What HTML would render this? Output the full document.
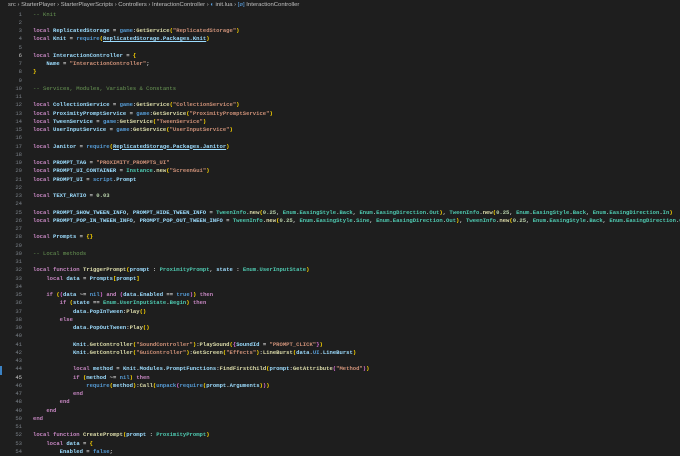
<!DOCTYPE html>
<html><head><meta charset="utf-8"><style>
body{margin:0;background:#1e1e1e;width:680px;height:454px;overflow:hidden;font-family:"Liberation Mono",monospace;}
.bc{position:absolute;top:0;left:0;height:10px;font:5.9px/10px "Liberation Sans",sans-serif;color:#c0c0c0;padding-left:8px;white-space:nowrap}
.code{position:absolute;top:10.5px;left:0;width:680px}
.l{height:8.25px;line-height:8.25px;font-size:5.55px;font-weight:bold;white-space:pre;position:relative}
.n{position:absolute;left:0;width:22px;text-align:right;color:#7a8088;font-weight:normal}
.t{position:absolute;left:33px;color:#d4d4d4}
.k{color:#c586c0}.v{color:#9cdcfe}.s{color:#ce9178}.f{color:#dcdcaa}.c{color:#6a9955;font-weight:normal}.e{color:#4ec9b0}.b{color:#569cd6}.m{color:#b5cea8}.y{color:#ffd700}.p{color:#da70d6}.u{text-decoration:underline}
</style></head><body>
<div class="bc">src › StarterPlayer › StarterPlayerScripts › Controllers › InteractionController › <span style="color:#5aa0e0">◐</span> init.lua › <span style="color:#5aa0e0">[ø]</span> InteractionController</div>
<div style="position:absolute;left:0;top:366px;width:2px;height:9px;background:#3b82c4"></div>
<div class="code">
<div class="l"><span class="n">1</span><span class="t"><span class="c">-- Knit</span></span></div>
<div class="l"><span class="n">2</span></div>
<div class="l"><span class="n">3</span><span class="t"><span class="k">local</span> <span class="v">ReplicatedStorage</span> = <span class="b">game</span>:<span class="f">GetService</span><span class="y">(</span><span class="s">"ReplicatedStorage"</span><span class="y">)</span></span></div>
<div class="l"><span class="n">4</span><span class="t"><span class="k">local</span> <span class="v">Knit</span> = <span class="b">require</span><span class="y">(</span><span class="v u">ReplicatedStorage.Packages.Knit</span><span class="y">)</span></span></div>
<div class="l"><span class="n">5</span></div>
<div class="l"><span class="n" style="color:#ccc">6</span><span class="t"><span class="k">local</span> <span class="v">InteractionController</span> = <span class="y">{</span></span></div>
<div class="l"><span class="n">7</span><span class="t">    <span class="v">Name</span> = <span class="s">"InteractionController"</span>;</span></div>
<div class="l"><span class="n">8</span><span class="t"><span class="y">}</span></span></div>
<div class="l"><span class="n">9</span></div>
<div class="l"><span class="n">10</span><span class="t"><span class="c">-- Services, Modules, Variables &amp; Constants</span></span></div>
<div class="l"><span class="n">11</span></div>
<div class="l"><span class="n">12</span><span class="t"><span class="k">local</span> <span class="v">CollectionService</span> = <span class="b">game</span>:<span class="f">GetService</span><span class="y">(</span><span class="s">"CollectionService"</span><span class="y">)</span></span></div>
<div class="l"><span class="n">13</span><span class="t"><span class="k">local</span> <span class="v">ProximityPromptService</span> = <span class="b">game</span>:<span class="f">GetService</span><span class="y">(</span><span class="s">"ProximityPromptService"</span><span class="y">)</span></span></div>
<div class="l"><span class="n">14</span><span class="t"><span class="k">local</span> <span class="v">TweenService</span> = <span class="b">game</span>:<span class="f">GetService</span><span class="y">(</span><span class="s">"TweenService"</span><span class="y">)</span></span></div>
<div class="l"><span class="n">15</span><span class="t"><span class="k">local</span> <span class="v">UserInputService</span> = <span class="b">game</span>:<span class="f">GetService</span><span class="y">(</span><span class="s">"UserInputService"</span><span class="y">)</span></span></div>
<div class="l"><span class="n">16</span></div>
<div class="l"><span class="n">17</span><span class="t"><span class="k">local</span> <span class="v">Janitor</span> = <span class="b">require</span><span class="y">(</span><span class="v u">ReplicatedStorage.Packages.Janitor</span><span class="y">)</span></span></div>
<div class="l"><span class="n">18</span></div>
<div class="l"><span class="n">19</span><span class="t"><span class="k">local</span> <span class="v">PROMPT_TAG</span> = <span class="s">"PROXIMITY_PROMPTS_UI"</span></span></div>
<div class="l"><span class="n">20</span><span class="t"><span class="k">local</span> <span class="v">PROMPT_UI_CONTAINER</span> = <span class="e">Instance</span>.<span class="f">new</span><span class="y">(</span><span class="s">"ScreenGui"</span><span class="y">)</span></span></div>
<div class="l"><span class="n">21</span><span class="t"><span class="k">local</span> <span class="v">PROMPT_UI</span> = <span class="b">script</span>.<span class="v">Prompt</span></span></div>
<div class="l"><span class="n">22</span></div>
<div class="l"><span class="n">23</span><span class="t"><span class="k">local</span> <span class="v">TEXT_RATIO</span> = <span class="m">0.03</span></span></div>
<div class="l"><span class="n">24</span></div>
<div class="l"><span class="n">25</span><span class="t"><span class="k">local</span> <span class="v">PROMPT_SHOW_TWEEN_INFO</span>, <span class="v">PROMPT_HIDE_TWEEN_INFO</span> = <span class="e">TweenInfo</span>.<span class="f">new</span><span class="y">(</span><span class="m">0.25</span>, <span class="e">Enum</span>.<span class="e">EasingStyle</span>.<span class="e">Back</span>, <span class="e">Enum</span>.<span class="e">EasingDirection</span>.<span class="e">Out</span><span class="y">)</span>, <span class="e">TweenInfo</span>.<span class="f">new</span><span class="y">(</span><span class="m">0.25</span>, <span class="e">Enum</span>.<span class="e">EasingStyle</span>.<span class="e">Back</span>, <span class="e">Enum</span>.<span class="e">EasingDirection</span>.<span class="e">In</span><span class="y">)</span></span></div>
<div class="l"><span class="n">26</span><span class="t"><span class="k">local</span> <span class="v">PROMPT_POP_IN_TWEEN_INFO</span>, <span class="v">PROMPT_POP_OUT_TWEEN_INFO</span> = <span class="e">TweenInfo</span>.<span class="f">new</span><span class="y">(</span><span class="m">0.25</span>, <span class="e">Enum</span>.<span class="e">EasingStyle</span>.<span class="e">Sine</span>, <span class="e">Enum</span>.<span class="e">EasingDirection</span>.<span class="e">Out</span><span class="y">)</span>, <span class="e">TweenInfo</span>.<span class="f">new</span><span class="y">(</span><span class="m">0.25</span>, <span class="e">Enum</span>.<span class="e">EasingStyle</span>.<span class="e">Back</span>, <span class="e">Enum</span>.<span class="e">EasingDirection</span>.<span class="e">Out</span><span class="y">)</span></span></div>
<div class="l"><span class="n">27</span></div>
<div class="l"><span class="n">28</span><span class="t"><span class="k">local</span> <span class="v">Prompts</span> = <span class="y">{}</span></span></div>
<div class="l"><span class="n">29</span></div>
<div class="l"><span class="n">30</span><span class="t"><span class="c">-- Local methods</span></span></div>
<div class="l"><span class="n">31</span></div>
<div class="l"><span class="n">32</span><span class="t"><span class="k">local</span> <span class="k">function</span> <span class="f">TriggerPrompt</span><span class="y">(</span><span class="v">prompt</span> : <span class="e">ProximityPrompt</span>, <span class="v">state</span> : <span class="e">Enum.UserInputState</span><span class="y">)</span></span></div>
<div class="l"><span class="n">33</span><span class="t">    <span class="k">local</span> <span class="v">data</span> = <span class="v">Prompts</span><span class="y">[</span><span class="v">prompt</span><span class="y">]</span></span></div>
<div class="l"><span class="n">34</span></div>
<div class="l"><span class="n">35</span><span class="t">    <span class="k">if</span> <span class="y">(</span><span class="p">(</span><span class="v">data</span> ~= <span class="b">nil</span><span class="p">)</span> <span class="k">and</span> <span class="p">(</span><span class="v">data</span>.<span class="v">Enabled</span> == <span class="b">true</span><span class="p">)</span><span class="y">)</span> <span class="k">then</span></span></div>
<div class="l"><span class="n">36</span><span class="t">        <span class="k">if</span> <span class="y">(</span><span class="v">state</span> == <span class="e">Enum</span>.<span class="e">UserInputState</span>.<span class="e">Begin</span><span class="y">)</span> <span class="k">then</span></span></div>
<div class="l"><span class="n">37</span><span class="t">            <span class="v">data</span>.<span class="v">PopInTween</span>:<span class="f">Play</span><span class="y">()</span></span></div>
<div class="l"><span class="n">38</span><span class="t">        <span class="k">else</span></span></div>
<div class="l"><span class="n">39</span><span class="t">            <span class="v">data</span>.<span class="v">PopOutTween</span>:<span class="f">Play</span><span class="y">()</span></span></div>
<div class="l"><span class="n">40</span></div>
<div class="l"><span class="n">41</span><span class="t">            <span class="v">Knit</span>.<span class="f">GetController</span><span class="y">(</span><span class="s">"SoundController"</span><span class="y">)</span>:<span class="f">PlaySound</span><span class="y">(</span><span class="p">{</span><span class="v">SoundId</span> = <span class="s">"PROMPT_CLICK"</span><span class="p">}</span><span class="y">)</span></span></div>
<div class="l"><span class="n">42</span><span class="t">            <span class="v">Knit</span>.<span class="f">GetController</span><span class="y">(</span><span class="s">"GuiController"</span><span class="y">)</span>:<span class="f">GetScreen</span><span class="y">(</span><span class="s">"Effects"</span><span class="y">)</span>:<span class="f">LineBurst</span><span class="y">(</span><span class="v">data</span>.<span class="b">UI</span>.<span class="v">LineBurst</span><span class="y">)</span></span></div>
<div class="l"><span class="n">43</span></div>
<div class="l"><span class="n">44</span><span class="t">            <span class="k">local</span> <span class="v">method</span> = <span class="v">Knit</span>.<span class="v">Modules</span>.<span class="v">PromptFunctions</span>:<span class="f">FindFirstChild</span><span class="y">(</span><span class="v">prompt</span>:<span class="f">GetAttribute</span><span class="p">(</span><span class="s">"Method"</span><span class="p">)</span><span class="y">)</span></span></div>
<div class="l"><span class="n" style="color:#ccc">45</span><span class="t">            <span class="k">if</span> <span class="y">(</span><span class="v">method</span> ~= <span class="b">nil</span><span class="y">)</span> <span class="k">then</span></span></div>
<div class="l"><span class="n">46</span><span class="t">                <span class="b">require</span><span class="y">(</span><span class="v">method</span><span class="y">)</span>:<span class="f">Call</span><span class="y">(</span><span class="b">unpack</span><span class="p">(</span><span class="b">require</span><span class="y">(</span><span class="v">prompt</span>.<span class="v">Arguments</span><span class="y">)</span><span class="p">)</span><span class="y">)</span></span></div>
<div class="l"><span class="n">47</span><span class="t">            <span class="k">end</span></span></div>
<div class="l"><span class="n">48</span><span class="t">        <span class="k">end</span></span></div>
<div class="l"><span class="n">49</span><span class="t">    <span class="k">end</span></span></div>
<div class="l"><span class="n">50</span><span class="t"><span class="k">end</span></span></div>
<div class="l"><span class="n">51</span></div>
<div class="l"><span class="n">52</span><span class="t"><span class="k">local</span> <span class="k">function</span> <span class="f">CreatePrompt</span><span class="y">(</span><span class="v">prompt</span> : <span class="e">ProximityPrompt</span><span class="y">)</span></span></div>
<div class="l"><span class="n">53</span><span class="t">    <span class="k">local</span> <span class="v">data</span> = <span class="y">{</span></span></div>
<div class="l"><span class="n">54</span><span class="t">        <span class="v">Enabled</span> = <span class="b">false</span>;</span></div>
</div>
</body></html>
